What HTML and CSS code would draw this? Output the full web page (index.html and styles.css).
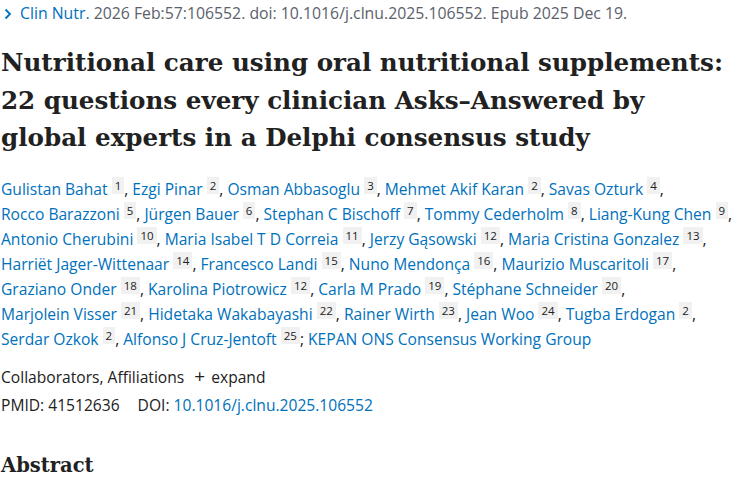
FILE: index.html
```html
<!DOCTYPE html>
<html>
<head>
<meta charset="utf-8">
<link rel="stylesheet" href="styles.css">
</head>
<body>
<main class="article">
  <div class="cit"><svg class="chev" width="8" height="12" viewBox="0 0 8 12"><path d="M1.5 1.5 L6 6 L1.5 10.5" fill="none" stroke="#0071bc" stroke-width="1.8"/></svg><a class="journal" href="#">Clin Nutr.</a> 2026 Feb:57:106552. doi: 10.1016/j.clnu.2025.106552. Epub 2025 Dec 19.</div>
  <h1 class="title">Nutritional care using oral nutritional supplements: 22 questions every clinician Asks–Answered by global experts in a Delphi consensus study</h1>
  <div class="authors">
    <span class="au"><a href="#">Gulistan Bahat</a> <sup>1</sup></span>, <span class="au"><a href="#">Ezgi Pinar</a> <sup>2</sup></span>, <span class="au"><a href="#">Osman Abbasoglu</a> <sup>3</sup></span>, <span class="au"><a href="#">Mehmet Akif Karan</a> <sup>2</sup></span>, <span class="au"><a href="#">Savas Ozturk</a> <sup>4</sup></span>, <span class="au"><a href="#">Rocco Barazzoni</a> <sup>5</sup></span>, <span class="au"><a href="#">Jürgen Bauer</a> <sup>6</sup></span>, <span class="au"><a href="#">Stephan C Bischoff</a> <sup>7</sup></span>, <span class="au"><a href="#">Tommy Cederholm</a> <sup>8</sup></span>, <span class="au"><a href="#">Liang-Kung Chen</a> <sup>9</sup></span>, <span class="au"><a href="#">Antonio Cherubini</a> <sup>10</sup></span>, <span class="au"><a href="#">Maria Isabel T D Correia</a> <sup>11</sup></span>, <span class="au"><a href="#">Jerzy Gąsowski</a> <sup>12</sup></span>, <span class="au"><a href="#">Maria Cristina Gonzalez</a> <sup>13</sup></span>, <span class="au"><a href="#">Harriët Jager-Wittenaar</a> <sup>14</sup></span>, <span class="au"><a href="#">Francesco Landi</a> <sup>15</sup></span>, <span class="au"><a href="#">Nuno Mendonça</a> <sup>16</sup></span>, <span class="au"><a href="#">Maurizio Muscaritoli</a> <sup>17</sup></span>, <span class="au"><a href="#">Graziano Onder</a> <sup>18</sup></span>, <span class="au"><a href="#">Karolina Piotrowicz</a> <sup>12</sup></span>, <span class="au"><a href="#">Carla M Prado</a> <sup>19</sup></span>, <span class="au"><a href="#">Stéphane Schneider</a> <sup>20</sup></span>, <span class="au"><a href="#">Marjolein Visser</a> <sup>21</sup></span>, <span class="au"><a href="#">Hidetaka Wakabayashi</a> <sup>22</sup></span>, <span class="au"><a href="#">Rainer Wirth</a> <sup>23</sup></span>, <span class="au"><a href="#">Jean Woo</a> <sup>24</sup></span>, <span class="au"><a href="#">Tugba Erdogan</a> <sup>2</sup></span>, <span class="au"><a href="#">Serdar Ozkok</a> <sup>2</sup></span>, <span class="au"><a href="#">Alfonso J Cruz-Jentoft</a> <sup>25</sup></span>; <a href="#">KEPAN ONS Consensus Working Group</a>
  </div>
  <div class="expand-row">Collaborators, Affiliations <span class="plus">+</span> expand</div>
  <div class="ids">PMID: 41512636 <span class="doi-label">DOI:</span> <a href="#">10.1016/j.clnu.2025.106552</a></div>
  <h2 class="abs-title">Abstract</h2>
  <p class="abs-text"><strong>Background and aims:</strong> Malnutrition is common across all clinical settings and is associated with poor outcomes.</p>
</main>
</body>
</html>
```
FILE: styles.css
```css
html, body {
  margin: 0;
  padding: 0;
  background: #fff;
}
body {
  font-family: "Open Sans", "Noto Sans", sans-serif;
  color: #212121;
  font-size: 15.6px;
  overflow: hidden;
  height: 500px;
}
a {
  color: #0071bc;
  text-decoration: none;
}
.article {
  padding: 0 0 0 1px;
  width: 749px;
  overflow: hidden;
}
.cit {
  height: 26px;
  line-height: 26px;
  color: #5b616b;
  font-size: 15.8px;
  white-space: nowrap;
}
.chev {
  margin: 0 8px 0 3px;
  vertical-align: -1px;
}
.title {
  font-family: "DejaVu Serif", serif;
  font-weight: bold;
  font-size: 24.6px;
  line-height: 37.5px;
  margin: 18px 0 20px;
  color: #212121;
  max-width: 732px;
}
.authors {
  line-height: 25px;
  color: #212121;
  width: 740px;
}
.au {
  white-space: nowrap;
}
.authors sup {
  font-size: 11.5px;
  vertical-align: 5px;
  line-height: 1;
  background: #f1f1f1;
  padding: 1px 3px;
  color: #212121;
}
.expand-row {
  margin-top: 14px;
  line-height: 20px;
}
.plus {
  font-size: 19px;
  margin: 0 2px 0 6px;
}
.ids {
  margin-top: 8px;
  line-height: 20px;
}
.doi-label {
  margin-left: 14px;
}
.abs-title {
  font-family: "DejaVu Serif", serif;
  font-size: 19.5px;
  font-weight: bold;
  margin: 36px 0 0;
  line-height: 30px;
}
.abs-text {
  margin: 18px 0 0;
  white-space: nowrap;
}
```
